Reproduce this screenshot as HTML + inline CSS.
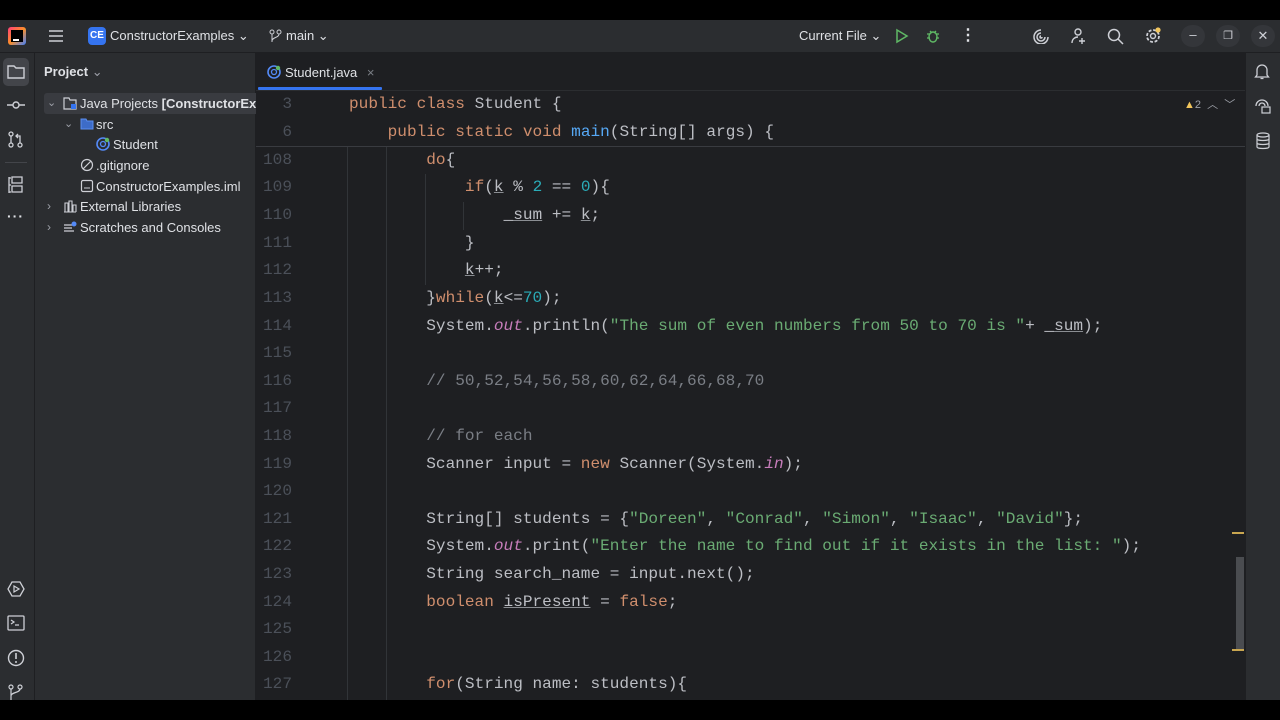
<!DOCTYPE html>
<html><head><meta charset="utf-8"><style>
*{margin:0;padding:0;box-sizing:border-box}
body{width:1280px;height:720px;background:#000;position:relative;overflow:hidden;font-family:"Liberation Sans",sans-serif;color:#dfe1e5}
.abs{position:absolute}
#title{left:0;top:20px;width:1280px;height:33px;background:#2b2d30;border-bottom:1px solid #1e1f22}
#lstrip{left:0;top:53px;width:35px;height:647px;background:#2b2d30;border-right:1px solid #1e1f22}
#proj{left:35px;top:53px;width:221px;height:647px;background:#2b2d30;border-right:1px solid #1e1f22}
#ed{left:256px;top:53px;width:989px;height:647px;background:#1e1f22}
#rstrip{left:1245px;top:53px;width:35px;height:647px;background:#2b2d30;border-left:1px solid #1e1f22}
.t{font-size:13px;color:#dfe1e5;white-space:nowrap}
.code{position:absolute;left:349px;font-family:"Liberation Mono",monospace;font-size:16.1px;color:#bcbec4;white-space:pre;line-height:20px}
.ln{position:absolute;width:40px;left:252px;text-align:right;font-family:"Liberation Mono",monospace;font-size:16.1px;color:#4b5059;line-height:20px}
.k{color:#cf8e6d}.s{color:#6aab73}.n{color:#2aacb8}.c{color:#7a7e85}.f{color:#c77dbb;font-style:italic}.m{color:#56a8f5}.u{text-decoration:underline;text-decoration-color:#8a8d92}
svg{position:absolute}
</style></head><body>
<div id="title" class="abs"></div>
<div class="abs" style="left:8px;top:27px;width:18px;height:18px;border-radius:3px;background:linear-gradient(135deg,#ff3d7a,#fc8f29 50%,#3c7fff)"></div>
<div class="abs" style="left:11px;top:30px;width:12px;height:12px;background:#000"></div>
<div class="abs" style="left:13px;top:39px;width:6px;height:1.5px;background:#fff"></div>
<svg style="left:48px;top:29px" width="16" height="14"><path d="M1 2h14M1 7h14M1 12h14" stroke="#ced0d6" stroke-width="1.5"/></svg>
<div class="abs" style="left:88px;top:27px;width:18px;height:18px;border-radius:4px;background:#3574f0;color:#fff;font-size:10px;font-weight:bold;text-align:center;line-height:18px">CE</div>
<div class="abs t" style="left:110px;top:28px">ConstructorExamples ⌄</div>
<svg style="left:268px;top:29px" width="14" height="14"><circle cx="4" cy="3" r="2" fill="none" stroke="#ced0d6"/><circle cx="11" cy="3" r="2" fill="none" stroke="#ced0d6"/><path d="M4 5v8M11 5c0 4-7 3-7 7" fill="none" stroke="#ced0d6"/></svg>
<div class="abs t" style="left:286px;top:28px">main ⌄</div>
<div class="abs t" style="left:799px;top:28px">Current File ⌄</div>
<svg style="left:895px;top:28px" width="14" height="16"><path d="M2 2l10 6-10 6z" fill="none" stroke="#5fb865" stroke-width="1.5"/></svg>
<svg style="left:925px;top:28px" width="16" height="16"><ellipse cx="8" cy="9" rx="4" ry="5" fill="none" stroke="#5fb865" stroke-width="1.4"/><path d="M2 6h3M11 6h3M2 10h3M11 10h3M5 3l2 2M11 3l-2 2" stroke="#5fb865" stroke-width="1.3"/></svg>
<div class="abs t" style="left:960px;top:25px;font-size:16px;font-weight:bold">⋮</div>
<svg style="left:1032px;top:28px" width="18" height="16"><path d="M9 2a7 7 0 1 0 7 7M9 5a4 4 0 1 0 4 4M9 8a1 1 0 1 0 1 1" fill="none" stroke="#ced0d6" stroke-width="1.5"/></svg>
<svg style="left:1070px;top:27px" width="18" height="18"><circle cx="8" cy="5" r="3" fill="none" stroke="#ced0d6" stroke-width="1.4"/><path d="M2 16c0-4 3-6 6-6M12 11v6M9 14h6" fill="none" stroke="#ced0d6" stroke-width="1.4"/></svg>
<svg style="left:1107px;top:28px" width="18" height="18"><circle cx="7" cy="7" r="5.5" fill="none" stroke="#ced0d6" stroke-width="1.5"/><path d="M11 11l5 5" stroke="#ced0d6" stroke-width="1.5"/></svg>
<svg style="left:1144px;top:27px" width="18" height="18"><circle cx="9" cy="9" r="6" fill="none" stroke="#ced0d6" stroke-width="1.8" stroke-dasharray="3 1.7"/><circle cx="9" cy="9" r="2.5" fill="none" stroke="#ced0d6" stroke-width="1.4"/><circle cx="14" cy="3" r="2.6" fill="#f2c55c"/></svg>
<div class="abs" style="left:1181px;top:25px;width:24px;height:22px;border-radius:11px;background:#34363a;color:#ced0d6;text-align:center;font-size:13px;line-height:20px">–</div>
<div class="abs" style="left:1216px;top:25px;width:24px;height:22px;border-radius:11px;background:#34363a;color:#ced0d6;text-align:center;font-size:11px;line-height:22px">❐</div>
<div class="abs" style="left:1251px;top:25px;width:24px;height:22px;border-radius:11px;background:#34363a;color:#ced0d6;text-align:center;font-size:13px;line-height:22px">✕</div>

<div id="lstrip" class="abs"></div>
<div class="abs" style="left:3px;top:58px;width:26px;height:28px;border-radius:5px;background:#43454a"></div>
<svg style="left:7px;top:64px" width="18" height="16"><path d="M1 2h6l2 2h8v10H1z" fill="none" stroke="#ced0d6" stroke-width="1.4"/></svg>
<svg style="left:6px;top:99px" width="20" height="12"><circle cx="10" cy="6" r="3" fill="none" stroke="#ced0d6" stroke-width="1.4"/><path d="M1 6h6M13 6h6" stroke="#ced0d6" stroke-width="1.4"/></svg>
<svg style="left:8px;top:131px" width="16" height="18"><circle cx="3" cy="3" r="2" fill="none" stroke="#ced0d6" stroke-width="1.3"/><circle cx="3" cy="14" r="2" fill="none" stroke="#ced0d6" stroke-width="1.3"/><circle cx="12" cy="14" r="2" fill="none" stroke="#ced0d6" stroke-width="1.3"/><path d="M3 5v7M12 12V5H8M10 3L8 5l2 2" fill="none" stroke="#ced0d6" stroke-width="1.3"/></svg>
<div class="abs" style="left:5px;top:162px;width:22px;height:1px;background:#43454a"></div>
<svg style="left:8px;top:176px" width="16" height="18"><path d="M1 1v16M1 2h2M1 9h2M1 16h2M4 1h10v6H4zM4 10h10v6H4z" fill="none" stroke="#ced0d6" stroke-width="1.3"/></svg>
<div class="abs t" style="left:7px;top:208px;font-size:14px;font-weight:bold;letter-spacing:1px">···</div>
<svg style="left:7px;top:580px" width="18" height="18"><path d="M5 2h8l4 7-4 7H5L1 9z" fill="none" stroke="#ced0d6" stroke-width="1.3"/><path d="M7 6l5 3-5 3z" fill="none" stroke="#ced0d6" stroke-width="1.2"/></svg>
<svg style="left:7px;top:615px" width="18" height="16"><rect x="1" y="1" width="16" height="14" rx="1" fill="none" stroke="#ced0d6" stroke-width="1.3"/><path d="M4 5l3 2-3 2M8 10h4" fill="none" stroke="#ced0d6" stroke-width="1.2"/></svg>
<svg style="left:7px;top:649px" width="18" height="18"><circle cx="9" cy="9" r="7.5" fill="none" stroke="#ced0d6" stroke-width="1.4"/><path d="M9 4v6" stroke="#ced0d6" stroke-width="1.6"/><circle cx="9" cy="13" r="1" fill="#ced0d6"/></svg>
<svg style="left:7px;top:684px" width="18" height="16"><circle cx="4" cy="3" r="2" fill="none" stroke="#ced0d6" stroke-width="1.2"/><circle cx="13" cy="3" r="2" fill="none" stroke="#ced0d6" stroke-width="1.2"/><path d="M4 5v11M13 5c0 4-9 3-9 7" fill="none" stroke="#ced0d6" stroke-width="1.2"/></svg>

<div id="proj" class="abs"></div>
<div class="abs t" style="left:44px;top:64px;font-weight:bold">Project <span style="font-weight:normal;color:#9da0a8">⌄</span></div>
<div class="abs" style="left:44px;top:93px;width:212px;height:21px;background:#393b40;border-radius:3px 0 0 3px"></div>
<div class="abs t" style="left:47px;top:96px;color:#9da0a8;font-size:11px">⌄</div>
<svg style="left:63px;top:97px" width="14" height="13"><path d="M1 1h5l1 2h6v9H1z" fill="none" stroke="#ced0d6" stroke-width="1.2"/><rect x="8" y="7" width="5" height="5" fill="#3574f0"/></svg>
<div class="abs t" style="left:80px;top:96px;width:176px;overflow:hidden">Java Projects <b>[ConstructorExamples]</b></div>
<div class="abs t" style="left:64px;top:117px;color:#9da0a8;font-size:11px">⌄</div>
<svg style="left:80px;top:118px" width="14" height="12"><path d="M1 1h5l1 2h6v8H1z" fill="#3d6cc8" stroke="#5b8ef0" stroke-width="1"/></svg>
<div class="abs t" style="left:96px;top:117px">src</div>
<svg style="left:96px;top:137px" width="14" height="14"><circle cx="7" cy="7" r="6" fill="none" stroke="#548af7" stroke-width="1.6"/><circle cx="7" cy="7" r="2.5" fill="none" stroke="#548af7" stroke-width="1.3"/><circle cx="11" cy="3" r="2.2" fill="#5fb865"/></svg>
<div class="abs t" style="left:113px;top:137px">Student</div>
<svg style="left:80px;top:158px" width="14" height="14"><circle cx="7" cy="7" r="5.5" fill="none" stroke="#ced0d6" stroke-width="1.2"/><path d="M3 11l8-8" stroke="#ced0d6" stroke-width="1.2"/></svg>
<div class="abs t" style="left:96px;top:158px">.gitignore</div>
<svg style="left:80px;top:179px" width="14" height="14"><rect x="1.5" y="1.5" width="11" height="11" rx="1.5" fill="none" stroke="#ced0d6" stroke-width="1.2"/><path d="M4 9h6" stroke="#ced0d6"/></svg>
<div class="abs t" style="left:96px;top:179px">ConstructorExamples.iml</div>
<div class="abs t" style="left:47px;top:199px;color:#9da0a8;font-size:12px">›</div>
<svg style="left:63px;top:200px" width="14" height="13"><path d="M1 12h12M2 12V3h3v9M6 12V1h3v11M10 12V5h3v7" fill="none" stroke="#ced0d6" stroke-width="1.1"/></svg>
<div class="abs t" style="left:80px;top:199px">External Libraries</div>
<div class="abs t" style="left:47px;top:220px;color:#9da0a8;font-size:12px">›</div>
<svg style="left:63px;top:221px" width="15" height="13"><path d="M1 4h8M1 7h8M1 10h10" stroke="#ced0d6" stroke-width="1.2"/><circle cx="11" cy="3" r="2.5" fill="#548af7"/></svg>
<div class="abs t" style="left:80px;top:220px">Scratches and Consoles</div>

<div id="ed" class="abs"></div>
<svg style="left:267px;top:65px" width="14" height="14"><circle cx="7" cy="7" r="6" fill="none" stroke="#548af7" stroke-width="1.6"/><circle cx="7" cy="7" r="2.5" fill="none" stroke="#548af7" stroke-width="1.3"/><circle cx="11" cy="3" r="2.2" fill="#5fb865"/></svg>
<div class="abs t" style="left:285px;top:65px">Student.java <span style="color:#7a7e85;margin-left:6px">×</span></div>
<div class="abs" style="left:258px;top:87px;width:124px;height:3px;background:#3574f0;border-radius:1px"></div>
<div class="abs" style="left:256px;top:90px;width:989px;height:1px;background:#2b2d30"></div>
<div class="abs" style="left:256px;top:146px;width:989px;height:1px;background:#393b40"></div>
<div class="abs" style="left:347px;top:147px;width:1px;height:553px;background:#313438"></div>
<div class="abs" style="left:386px;top:147px;width:1px;height:553px;background:#313438"></div>
<div class="abs" style="left:425px;top:174px;width:1px;height:111px;background:#313438"></div>
<div class="abs" style="left:463px;top:202px;width:1px;height:28px;background:#313438"></div>
<div class="abs t" style="left:1184px;top:96px;font-size:11px;color:#9da0a8"><span style="color:#f2c55c">▲</span>2 &nbsp;︿ &nbsp;﹀</div>

<div class="ln" style="top:94px">3</div><div class="code" style="top:94px"><span class="k">public class</span> Student {</div>
<div class="ln" style="top:122px">6</div><div class="code" style="top:122px">    <span class="k">public static void</span> <span class="m">main</span>(String[] args) {</div>
<div class="ln" style="top:150px">108</div><div class="code" style="top:150px">        <span class="k">do</span>{</div>
<div class="ln" style="top:177px">109</div><div class="code" style="top:177px">            <span class="k">if</span>(<span class="u">k</span> % <span class="n">2</span> == <span class="n">0</span>){</div>
<div class="ln" style="top:205px">110</div><div class="code" style="top:205px">                <span class="u">_sum</span> += <span class="u">k</span>;</div>
<div class="ln" style="top:233px">111</div><div class="code" style="top:233px">            }</div>
<div class="ln" style="top:260px">112</div><div class="code" style="top:260px">            <span class="u">k</span>++;</div>
<div class="ln" style="top:288px">113</div><div class="code" style="top:288px">        }<span class="k">while</span>(<span class="u">k</span>&lt;=<span class="n">70</span>);</div>
<div class="ln" style="top:316px">114</div><div class="code" style="top:316px">        System.<span class="f">out</span>.println(<span class="s">"The sum of even numbers from 50 to 70 is "</span>+ <span class="u">_sum</span>);</div>
<div class="ln" style="top:343px">115</div>
<div class="ln" style="top:371px">116</div><div class="code" style="top:371px">        <span class="c">// 50,52,54,56,58,60,62,64,66,68,70</span></div>
<div class="ln" style="top:398px">117</div>
<div class="ln" style="top:426px">118</div><div class="code" style="top:426px">        <span class="c">// for each</span></div>
<div class="ln" style="top:454px">119</div><div class="code" style="top:454px">        Scanner input = <span class="k">new</span> Scanner(System.<span class="f">in</span>);</div>
<div class="ln" style="top:481px">120</div>
<div class="ln" style="top:509px">121</div><div class="code" style="top:509px">        String[] students = {<span class="s">"Doreen"</span>, <span class="s">"Conrad"</span>, <span class="s">"Simon"</span>, <span class="s">"Isaac"</span>, <span class="s">"David"</span>};</div>
<div class="ln" style="top:536px">122</div><div class="code" style="top:536px">        System.<span class="f">out</span>.print(<span class="s">"Enter the name to find out if it exists in the list: "</span>);</div>
<div class="ln" style="top:564px">123</div><div class="code" style="top:564px">        String search_name = input.next();</div>
<div class="ln" style="top:592px">124</div><div class="code" style="top:592px">        <span class="k">boolean</span> <span class="u">isPresent</span> = <span class="k">false</span>;</div>
<div class="ln" style="top:619px">125</div>
<div class="ln" style="top:647px">126</div>
<div class="ln" style="top:674px">127</div><div class="code" style="top:674px">        <span class="k">for</span>(String name: students){</div>

<div class="abs" style="left:1236px;top:557px;width:8px;height:93px;background:#4a4c50"></div>
<div class="abs" style="left:1232px;top:532px;width:12px;height:2px;background:#c9a650"></div>
<div class="abs" style="left:1232px;top:649px;width:12px;height:2px;background:#c9a650"></div>

<div id="rstrip" class="abs"></div>
<svg style="left:1254px;top:62px" width="16" height="18"><path d="M3 13V8a5 5 0 0 1 10 0v5l1.5 2h-13z M6.5 16.5h3" fill="none" stroke="#ced0d6" stroke-width="1.3"/></svg>
<svg style="left:1254px;top:97px" width="18" height="18"><path d="M2 9a6 6 0 0 1 12 0M5 9a3 3 0 0 1 6 0" fill="none" stroke="#ced0d6" stroke-width="1.3"/><rect x="8" y="10" width="8" height="6" fill="none" stroke="#ced0d6" stroke-width="1.2"/></svg>
<svg style="left:1255px;top:132px" width="16" height="18"><ellipse cx="8" cy="3" rx="6" ry="2" fill="none" stroke="#ced0d6" stroke-width="1.2"/><path d="M2 3v12c0 2 12 2 12 0V3M2 7c0 2 12 2 12 0M2 11c0 2 12 2 12 0" fill="none" stroke="#ced0d6" stroke-width="1.2"/></svg>
</body></html>
